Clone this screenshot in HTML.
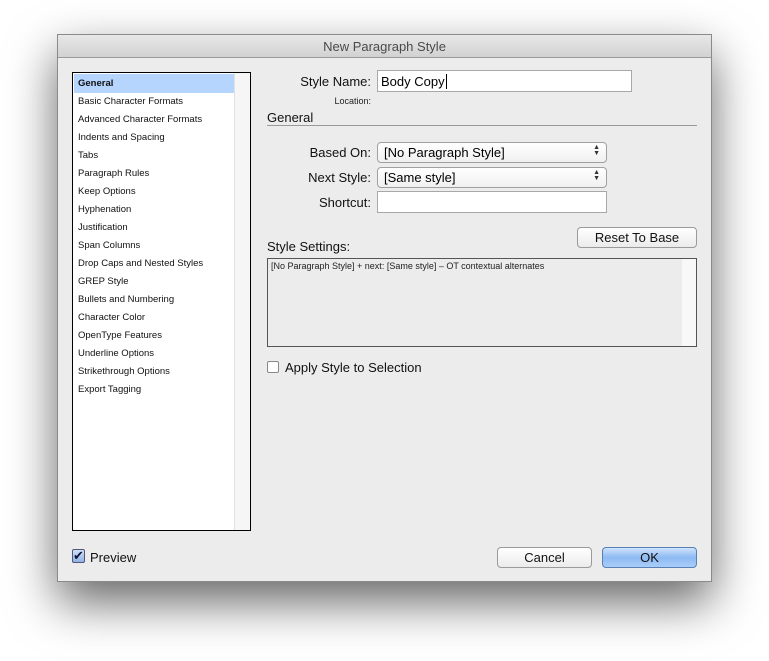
<!DOCTYPE html>
<html><head><style>
body{margin:0;width:769px;height:661px;background:#fff;position:relative;font-family:"Liberation Sans",sans-serif;overflow:hidden}
.win{position:absolute;left:57px;top:34px;width:655px;height:548px;background:#ececec;box-shadow:0 20px 45px rgba(0,0,0,.6);border:1px solid #8a8a8a;box-sizing:border-box}
.title{position:absolute;left:0;top:0;width:100%;height:22px;background:linear-gradient(#e8e8e8,#d2d2d2);border-bottom:1px solid #9a9a9a;text-align:center;font-size:13px;line-height:24px;color:#4a4a4a}
.a{position:absolute}
.list{left:72px;top:72px;width:179px;height:459px;border:1px solid #000;background:#fff;box-sizing:border-box}
.list .sb{position:absolute;right:0;top:0;width:15px;height:100%;background:#f6f6f6;border-left:1px solid #e2e2e2}
.item{position:absolute;left:5px;font-size:9.5px;color:#111;line-height:18px}
.sel{position:absolute;left:1px;top:1px;width:161px;height:19px;background:#b5d4fe}
.lbl{font-size:13px;color:#111;text-align:right}
.fld{background:#fff;border:1px solid #a8a8a8;box-sizing:border-box}
.pop{background:linear-gradient(#fff,#f0f0f0);border:1px solid #a0a0a0;border-radius:4px;box-sizing:border-box;font-size:13px;padding-left:6px;line-height:19px}
.btn{background:linear-gradient(#fff,#ebebeb);border:1px solid #9a9a9a;border-radius:4px;box-sizing:border-box;text-align:center;font-size:13px;line-height:19px;color:#111}
.arr{position:absolute;right:6px;top:2px;font-size:7px;line-height:6px;color:#333}
</style></head><body>
<div class="win"><div class="title">New Paragraph Style</div></div>
<div class="a list"><div class="sel"></div><div class="sb"></div>
<div class="item" style="top:2px;font-weight:bold">General</div>
<div class="item" style="top:20px">Basic Character Formats</div>
<div class="item" style="top:38px">Advanced Character Formats</div>
<div class="item" style="top:56px">Indents and Spacing</div>
<div class="item" style="top:74px">Tabs</div>
<div class="item" style="top:92px">Paragraph Rules</div>
<div class="item" style="top:110px">Keep Options</div>
<div class="item" style="top:128px">Hyphenation</div>
<div class="item" style="top:146px">Justification</div>
<div class="item" style="top:164px">Span Columns</div>
<div class="item" style="top:182px">Drop Caps and Nested Styles</div>
<div class="item" style="top:200px">GREP Style</div>
<div class="item" style="top:218px">Bullets and Numbering</div>
<div class="item" style="top:236px">Character Color</div>
<div class="item" style="top:254px">OpenType Features</div>
<div class="item" style="top:272px">Underline Options</div>
<div class="item" style="top:290px">Strikethrough Options</div>
<div class="item" style="top:308px">Export Tagging</div>
</div>
<div class="a lbl" style="left:260px;top:74px;width:111px">Style Name:</div>
<div class="a fld" style="left:377px;top:70px;width:255px;height:22px;font-size:13px;padding:3px 0 0 3px">Body Copy<span style="border-left:1px solid #000;margin-left:1px"></span></div>
<div class="a" style="left:310px;top:96px;width:61px;text-align:right;font-size:9px;color:#222">Location:</div>
<div class="a" style="left:267px;top:110px;font-size:13px;color:#111">General</div>
<div class="a" style="left:267px;top:125px;width:430px;height:1px;background:#9a9a9a"></div>
<div class="a lbl" style="left:260px;top:145px;width:111px">Based On:</div>
<div class="a pop" style="left:377px;top:142px;width:230px;height:21px">[No Paragraph Style]<div class="arr">▲<br>▼</div></div>
<div class="a lbl" style="left:260px;top:170px;width:111px">Next Style:</div>
<div class="a pop" style="left:377px;top:167px;width:230px;height:21px">[Same style]<div class="arr">▲<br>▼</div></div>
<div class="a lbl" style="left:260px;top:195px;width:111px">Shortcut:</div>
<div class="a fld" style="left:377px;top:191px;width:230px;height:22px"></div>
<div class="a btn" style="left:577px;top:227px;width:120px;height:21px">Reset To Base</div>
<div class="a" style="left:267px;top:239px;font-size:13px;color:#111">Style Settings:</div>
<div class="a" style="left:267px;top:258px;width:430px;height:89px;border:1px solid #555;background:#ececec;box-sizing:border-box;font-size:9px;padding:2px 3px;color:#222">[No Paragraph Style] + next: [Same style] – OT contextual alternates<div style="position:absolute;right:0;top:0;width:14px;height:100%;background:#f8f8f8"></div></div>
<div class="a" style="left:267px;top:361px;width:12px;height:12px;border:1px solid #888;border-radius:2px;background:#fff;box-sizing:border-box"></div>
<div class="a" style="left:285px;top:360px;font-size:13px;color:#111">Apply Style to Selection</div>
<div class="a" style="left:72px;top:549px;width:13px;height:14px;border:1px solid #557;border-radius:2px;background:linear-gradient(#cfe0f8,#8fb3e6);box-sizing:border-box;font-size:13px;line-height:11px;color:#113;text-align:center">✔</div>
<div class="a" style="left:90px;top:550px;font-size:13px;color:#111">Preview</div>
<div class="a btn" style="left:497px;top:547px;width:95px;height:21px">Cancel</div>
<div class="a btn" style="left:602px;top:547px;width:95px;height:21px;background:linear-gradient(#cfe3fb,#8dbaf3 50%,#a9cdf8);border-color:#5a7fb5">OK</div>
</body></html>
